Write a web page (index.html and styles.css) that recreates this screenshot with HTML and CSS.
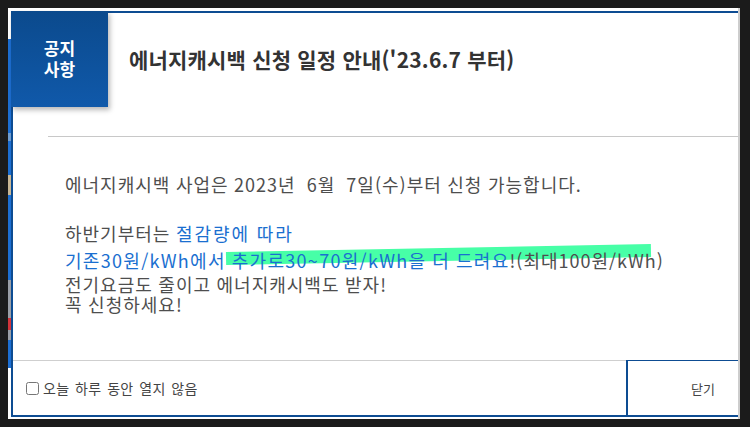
FILE: index.html
```html
<!DOCTYPE html>
<html lang="ko">
<head>
<meta charset="utf-8">
<title>공지사항</title>
<link rel="stylesheet" href="styles.css">
</head>
<body>
<div class="frame">
  <div class="edge"></div>
  <div class="popup">
    <div class="head">
      <div class="badge"><span>공지</span><span>사항</span></div>
      <h1 class="title">에너지캐시백 신청 일정 안내('23.6.7 부터)</h1>
    </div>
    <div class="divider"></div>
    <div class="content">
      <p class="line l1">에너지캐시백 사업은 2023년&nbsp; 6월&nbsp; 7일(수)부터 신청 가능합니다.</p>
      <p class="line blank"></p>
      <p class="line l2">하반기부터는 <span class="em em-wide">절감량에 따라</span></p>
      <p class="line l3"><span class="marker"></span><span class="em">기존30원/kWh에서 추가로30~70원/kWh을 더 드려요</span>!(최대100원/kWh)</p>
      <p class="line l4">전기요금도 줄이고 에너지캐시백도 받자!</p>
      <p class="line l5">꼭 신청하세요!</p>
    </div>
    <div class="foot">
      <label class="today"><input type="checkbox" class="check"><span>오늘 하루 동안 열지 않음</span></label>
      <button type="button" class="close">닫기</button>
    </div>
  </div>
</div>
</body>
</html>
```
FILE: styles.css
```css
html, body {
  margin: 0;
  background: #1b1b1b;
}
body {
  padding: 8px 0 0 8px;
  height: 427px;
  box-sizing: border-box;
  overflow: hidden;
  font-family: "Noto Sans CJK KR", "Noto Sans", sans-serif;
}
.frame {
  width: 732px;
  height: 411px;
  box-sizing: border-box;
  padding: 3px 0 2px 0;
  display: flex;
  background: #fff;
  border-right: 2px solid #cdcdcd;
}
.edge {
  width: 3px;
  margin: -3px 0 -2px 0;
  background: linear-gradient(to bottom,
    #fff 0 31px,
    #1d6fd3 31px 125px,
    #6f9ccf 125px 133px,
    #1d6fd3 133px 167px,
    #c9b795 167px 187px,
    #1d6fd3 187px 272px,
    #9a9ea6 272px 310px,
    #d2343b 310px 322px,
    #9a9ea6 322px 332px,
    #1d6fd3 332px 360px,
    #fff 360px);
}
.popup {
  flex: 1;
  display: flex;
  flex-direction: column;
  border: 2px solid #0d4c92;
  border-right: 0;
  min-width: 0;
}
.head {
  display: flex;
  align-items: center;
  margin: -2px 0 0 -2px;
  padding-bottom: 29px;
}
.badge {
  width: 97px;
  height: 96px;
  flex: none;
  box-sizing: border-box;
  padding-bottom: 3px;
  display: flex;
  flex-direction: column;
  align-items: center;
  justify-content: center;
  background: linear-gradient(to bottom, #0b4a8d, #1059aa);
  color: #fff;
  font-size: 17px;
  font-weight: 700;
  line-height: 21px;
  box-shadow: 2px 3px 5px rgba(0, 0, 0, 0.28);
  position: relative;
  z-index: 1;
}
.title {
  margin: 0 0 0 21px;
  font-size: 21px;
  font-weight: 700;
  color: #333;
  line-height: 28px;
  letter-spacing: 0.2px;
}
.divider {
  margin-left: 35px;
  border-top: 1px solid #c8c8c8;
}
.content {
  flex: 1;
  padding: 37px 0 0 52px;
  color: #4e4e4e;
  font-size: 18px;
  letter-spacing: 1px;
  word-spacing: -0.5px;
}
.line {
  margin: 0;
  height: 21px;
  line-height: 21px;
  white-space: nowrap;
}
.blank { height: 26px; }
.l2 { height: 25px; line-height: 25px; }
.l3 { height: 28px; line-height: 28px; position: relative; z-index: 0; }
.l4 { height: 20px; line-height: 20px; }
.em {
  color: #1a6fd0;
  font-size: 18px;
  letter-spacing: 1.3px;
}
.em-wide {
  letter-spacing: 2px;
}
.marker {
  position: absolute;
  left: 161px;
  top: 2px;
  width: 425px;
  height: 13px;
  background: #47ffa7;
  transform: rotate(-1.1deg);
  z-index: -1;
}
.foot {
  height: 54px;
  display: flex;
  border-top: 1px solid #cfcfcf;
}
.today {
  flex: 1;
  display: flex;
  align-items: center;
  padding-left: 13px;
  font-size: 14px;
  letter-spacing: 0.3px;
  word-spacing: 1.5px;
  color: #444;
}
.check {
  width: 13px;
  height: 13px;
  margin: 0 4px 0 0;
}
.close {
  width: 112px;
  margin-top: -1px;
  box-sizing: border-box;
  border: 0;
  border-top: 1px solid #0d4c92;
  border-left: 2px solid #0d4c92;
  background: #fff;
  padding: 0 0 0 40px;
  font-family: inherit;
  font-size: 13px;
  color: #444;
}
```
